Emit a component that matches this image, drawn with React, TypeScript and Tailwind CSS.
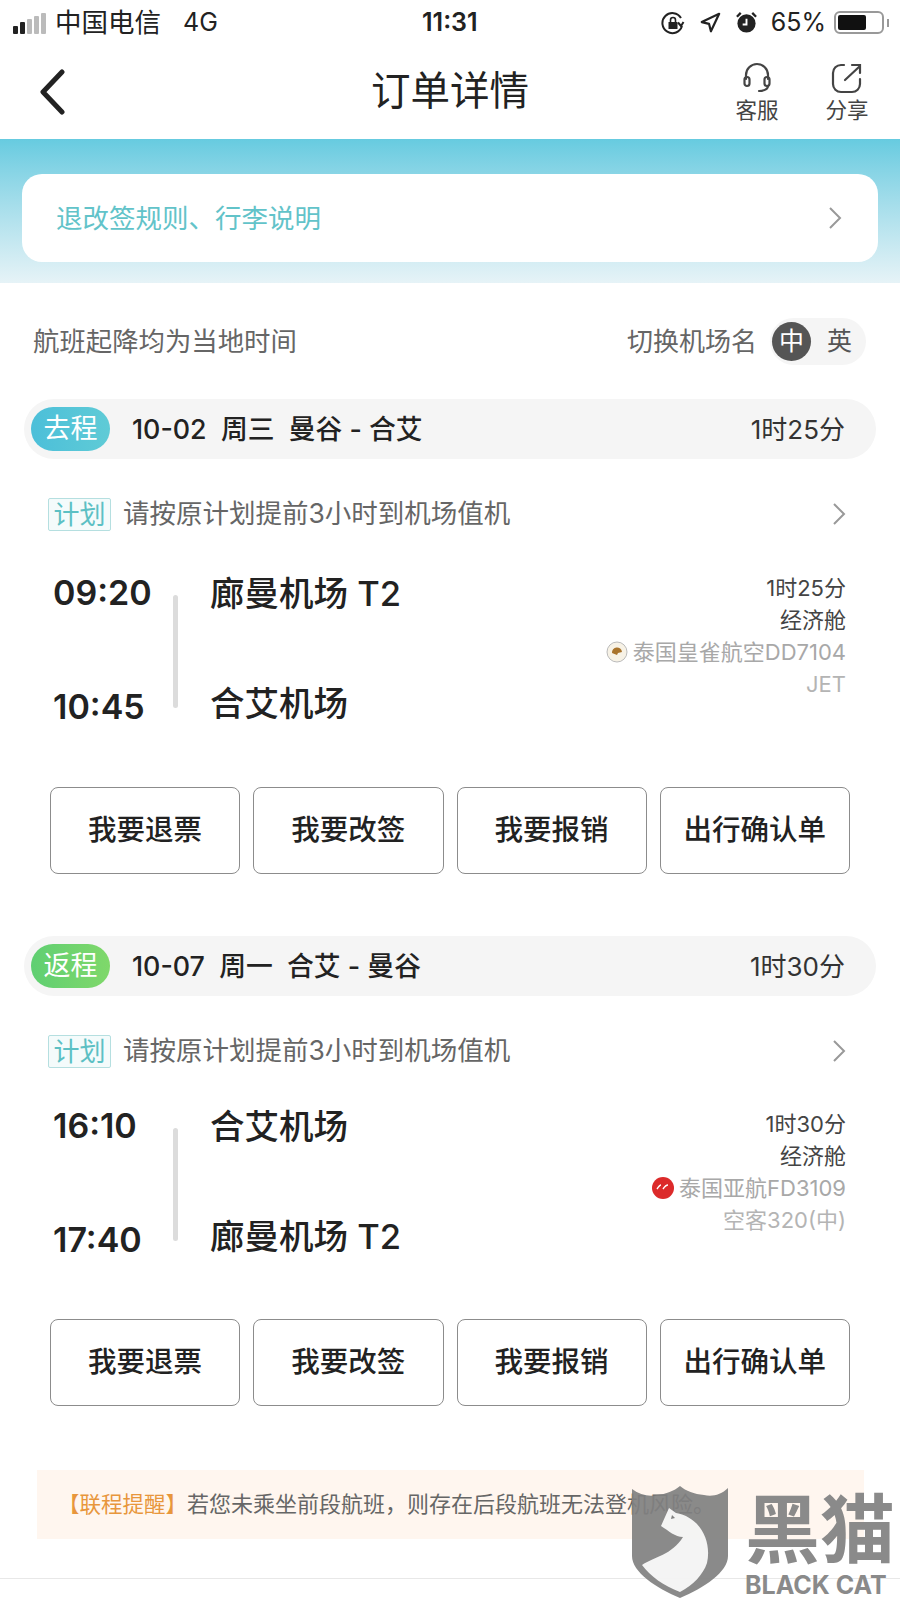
import React from 'react';
import { Navigation } from 'lucide-react';

const Chevron = ({ className }: { className: string }) => (
  <svg viewBox="0 0 14 24" className={className} fill="none" stroke="#999" strokeWidth="2">
    <path d="M2 2l10 10L2 22" />
  </svg>
);

const actions = ['我要退票', '我要改签', '我要报销', '出行确认单'];

type LegProps = {
  label: string;
  pill: string;
  route: string;
  duration: string;
  from: string;
  to: string;
  depart: string;
  arrive: string;
  airline: string;
  plane: string;
  logo: React.ReactNode;
  className: string;
  bodyClass: string;
  infoClass: string;
  actionsClass: string;
};

const Leg = (leg: LegProps) => (
  <section className={leg.className}>
    <div className="mx-[24px] h-[60px] flex items-center rounded-full bg-[#f5f5f5] pl-[7px] pr-[31px]">
      <span className={`w-[79px] h-[44px] rounded-full flex items-center justify-center text-white text-[27px] ${leg.pill}`}>
        {leg.label}
      </span>
      <span className="ml-[22px] text-[26.8px] font-medium text-[#222] whitespace-pre">{leg.route}</span>
      <span className="ml-auto text-[26px] text-[#333]">{leg.duration}</span>
    </div>

    <div className="mt-[38px] ml-[48px] mr-[54px] h-[34px] flex items-center">
      <span className="w-[63px] h-[33px] flex items-center justify-center border border-[#b5dfe0] bg-[#f4fbfb] rounded-[2px] text-[26px] text-[#5cc0c4]">
        计划
      </span>
      <span className="ml-[12px] text-[26.5px] text-[#666]">请按原计划提前3小时到机场值机</span>
      <Chevron className="ml-auto w-[14px] h-[24px]" />
    </div>

    <div className={`ml-[53px] mr-[54px] flex ${leg.bodyClass}`}>
      <div className="w-[120px] h-[154px] flex flex-col justify-between text-[34px] font-semibold text-[#222] leading-[40px]">
        <span>{leg.depart}</span>
        <span>{leg.arrive}</span>
      </div>
      <div className="w-[5px] h-[113px] mt-[22px] rounded-full bg-[#dcdcdc]" />
      <div className="ml-[32px] h-[152px] flex flex-col justify-between text-[34.5px] font-medium text-[#222] leading-[42px]">
        <span>{leg.from}</span>
        <span>{leg.to}</span>
      </div>
      <div className={`ml-auto flex flex-col items-end text-[22px] leading-[32px] text-[#444] ${leg.infoClass}`}>
        <span>{leg.duration}</span>
        <span>经济舱</span>
        <span className="flex items-center gap-[5px] text-[#a8a8a8]">
          {leg.logo}
          {leg.airline}
        </span>
        <span className="text-[#b4b4b4]">{leg.plane}</span>
      </div>
    </div>

    <div className={`ml-[50px] mr-[50px] grid grid-cols-4 gap-[13px] ${leg.actionsClass}`}>
      {actions.map((action) => (
        <button
          key={action}
          className="h-[87px] border border-[#8c8c8c] rounded-[8px] bg-white text-[28.5px] font-medium text-[#222]"
        >
          {action}
        </button>
      ))}
    </div>
  </section>
);

export default function App() {
  return (
    <div className="relative w-[900px] h-[1600px] overflow-hidden bg-white font-['Inter','Noto_Sans_CJK_SC',sans-serif]">
      {/* status bar */}
      <div className="relative h-[45px] flex items-center pl-[13px] pr-[11px] text-[#222]">
        <div className="flex items-end gap-[2px] h-[22px]">
          <span className="w-[5px] h-[8px] rounded-[1px] bg-[#222]" />
          <span className="w-[5px] h-[12px] rounded-[1px] bg-[#222]" />
          <span className="w-[5px] h-[15px] rounded-[1px] bg-[#bbb]" />
          <span className="w-[5px] h-[18px] rounded-[1px] bg-[#bbb]" />
          <span className="w-[5px] h-[21px] rounded-[1px] bg-[#bbb]" />
        </div>
        <span className="ml-[9px] text-[26.5px]">中国电信</span>
        <span className="ml-[22px] text-[25px]">4G</span>
        <span className="absolute left-[422px] text-[25px] font-semibold">11:31</span>
        <div className="ml-auto flex items-center">
          <svg viewBox="0 0 24 24" className="w-[24px] h-[24px]" fill="none" stroke="#222" strokeWidth="2">
            <path d="M21 15a10 10 0 1 1-1-8" />
            <path d="M22.5 11l-2.5 4-3-3.5" />
            <rect x="7.5" y="11" width="9" height="7" fill="#222" stroke="none" />
            <path d="M9.5 11V9a2.5 2.5 0 0 1 5 0v2" strokeWidth="1.6" />
          </svg>
          <Navigation className="ml-[14px] w-[22px] h-[22px]" strokeWidth={2.4} />
          <svg viewBox="0 0 24 24" className="ml-[14px] w-[23px] h-[23px]">
            <circle cx="12" cy="13" r="9.5" fill="#222" />
            <path d="M12 8v6h-4" stroke="#fff" strokeWidth="2" fill="none" />
            <path d="M2 6l4-4M22 6l-4-4" stroke="#222" strokeWidth="2.4" />
          </svg>
          <span className="ml-[13px] text-[25px]">65%</span>
          <div className="ml-[8px] w-[50px] h-[23px] rounded-[6px] border-2 border-[#999] p-[2px]">
            <div className="w-[28px] h-full rounded-[2px] bg-[#111]" />
          </div>
          <span className="ml-[3px] w-[2px] h-[8px] bg-[#999]" />
        </div>
      </div>

      {/* nav */}
      <div className="h-[94px] grid grid-cols-[1fr_auto_1fr] items-center">
        <div className="pl-[39px]">
          <svg viewBox="0 0 26 46" className="w-[26px] h-[46px]" fill="none" stroke="#222" strokeWidth="5" strokeLinecap="round" strokeLinejoin="round">
            <path d="M23 3L4 23l19 20" />
          </svg>
        </div>
        <h1 className="text-[39.5px] text-[#222]">订单详情</h1>
        <div className="flex justify-end gap-[40px] pr-[28px] text-[#444]">
          <div className="w-[50px] flex flex-col items-center">
            <svg viewBox="0 0 32 32" className="w-[32px] h-[32px]" fill="none" stroke="#444" strokeWidth="2.2" strokeLinecap="round">
              <path d="M5 17v-4a11 11 0 0 1 22 0v4" />
              <rect x="3.5" y="15" width="5" height="9" rx="2.5" />
              <rect x="23.5" y="15" width="5" height="9" rx="2.5" />
              <path d="M27 24c0 3-4 5-9 5" />
            </svg>
            <span className="mt-[3px] text-[21.5px] leading-[26px]">客服</span>
          </div>
          <div className="w-[50px] flex flex-col items-center">
            <svg viewBox="0 0 32 32" className="w-[32px] h-[32px]" fill="none" stroke="#444" strokeWidth="2.2" strokeLinecap="round">
              <path d="M13 3h-3a8 8 0 0 0-8 8v11a8 8 0 0 0 8 8h11a8 8 0 0 0 8-8v-5" />
              <path d="M14 18L29 4M21 3h8v8" />
            </svg>
            <span className="mt-[3px] text-[21.5px] leading-[26px]">分享</span>
          </div>
        </div>
      </div>

      {/* rules card */}
      <div className="h-[144px] pt-[35px] px-[22px] bg-gradient-to-b from-[#66cbe0] to-[#e6f3f7]">
        <div className="h-[88px] flex items-center justify-between pl-[34px] pr-[36px] rounded-[20px] bg-white">
          <span className="text-[26.5px] text-[#62c3c9] translate-y-[1px]">退改签规则、行李说明</span>
          <Chevron className="w-[14px] h-[24px]" />
        </div>
      </div>

      {/* airport name switch */}
      <div className="mt-[35px] h-[47px] pl-[33px] pr-[34px] flex items-center justify-between">
        <span className="text-[26.4px] text-[#666]">航班起降均为当地时间</span>
        <div className="flex items-center">
          <span className="text-[26px] text-[#666]">切换机场名</span>
          <div className="ml-[13px] w-[96px] h-[47px] flex items-center rounded-full bg-[#f5f5f5] pl-[2px] text-[25px]">
            <span className="w-[39px] h-[39px] rounded-full bg-[#555] text-white flex items-center justify-center">中</span>
            <span className="ml-[16px] text-[#555]">英</span>
          </div>
        </div>
      </div>

      <Leg
        className="mt-[34px]"
        bodyClass="mt-[42px]"
        infoClass="-mt-[1px]"
        actionsClass="mt-[60px]"
        label="去程"
        pill="bg-gradient-to-r from-[#4cbfd9] to-[#5fcbd6]"
        route="10-02  周三  曼谷 - 合艾"
        duration="1时25分"
        from="廊曼机场 T2"
        to="合艾机场"
        depart="09:20"
        arrive="10:45"
        airline="泰国皇雀航空DD7104"
        plane="JET"
        logo={
          <svg viewBox="0 0 22 22" className="w-[22px] h-[22px]">
            <circle cx="11" cy="11" r="10" fill="#f7f2e6" stroke="#bbb" />
            <path d="M6 12a5 5 0 0 1 10-1l-4 1-1 2z" fill="#a9742c" />
          </svg>
        }
      />

      <Leg
        className="mt-[62px]"
        bodyClass="mt-[38px]"
        infoClass="mt-[2px]"
        actionsClass="mt-[59px]"
        label="返程"
        pill="bg-gradient-to-r from-[#5fcf72] to-[#7fd86a]"
        route="10-07  周一  合艾 - 曼谷"
        duration="1时30分"
        from="合艾机场"
        to="廊曼机场 T2"
        depart="16:10"
        arrive="17:40"
        airline="泰国亚航FD3109"
        plane="空客320(中)"
        logo={
          <svg viewBox="0 0 22 22" className="w-[22px] h-[22px]">
            <circle cx="11" cy="11" r="11" fill="#dc2a2a" />
            <path d="M5 12c2-3 3-4 4-4M11 12c2-3 3-4 5-4" stroke="#fff" strokeWidth="1.4" fill="none" />
          </svg>
        }
      />

      {/* connection notice */}
      <div className="mt-[64px] ml-[37px] mr-[36px] h-[69px] flex items-center pl-[21px] bg-[#fff6ef] text-[#666]">
        <span className="text-[21.5px] text-[#e8963c]">【联程提醒】</span>
        <span className="text-[22px]">若您未乘坐前段航班，则存在后段航班无法登机风险。</span>
      </div>
      <div className="mt-[39px] border-t border-[#e8e8e8]" />

      {/* watermark */}
      <div className="absolute left-[631px] top-[1486px] flex items-start text-[#8a8a8a]">
        <svg viewBox="0 0 98 112" className="w-[98px] h-[112px]">
          <path
            fill="#808080"
            fillOpacity="0.92"
            d="M1 3c8 6 17 8 25 6 9-1 17-4 23-9 6 5 14 8 24 9 8 2 17 0 24-7v68c0 16-24 32-48 42C25 102 1 86 1 70z"
          />
          <path
            fill="#fff"
            fillOpacity="0.9"
            d="M30 40l8-18 7 5c24 4 36 28 31 50-4 12-14 22-27 29-16-6-30-16-38-27 12-8 30-10 41-28-8 0-14-6-22-11z"
          />
          <path d="M41 29l3 3-4 1z" fill="#808080" />
        </svg>
        <div className="ml-[16px] mt-[7px] flex flex-col">
          <span className="h-[76px] text-[75px] leading-[76px] font-bold font-['Liberation_Sans','Noto_Sans_CJK_SC',sans-serif]">黑猫</span>
          <span className="mt-[4px] text-[25px] leading-[24px] font-bold font-['Inter',sans-serif] whitespace-nowrap">BLACK CAT</span>
        </div>
      </div>
    </div>
  );
}
